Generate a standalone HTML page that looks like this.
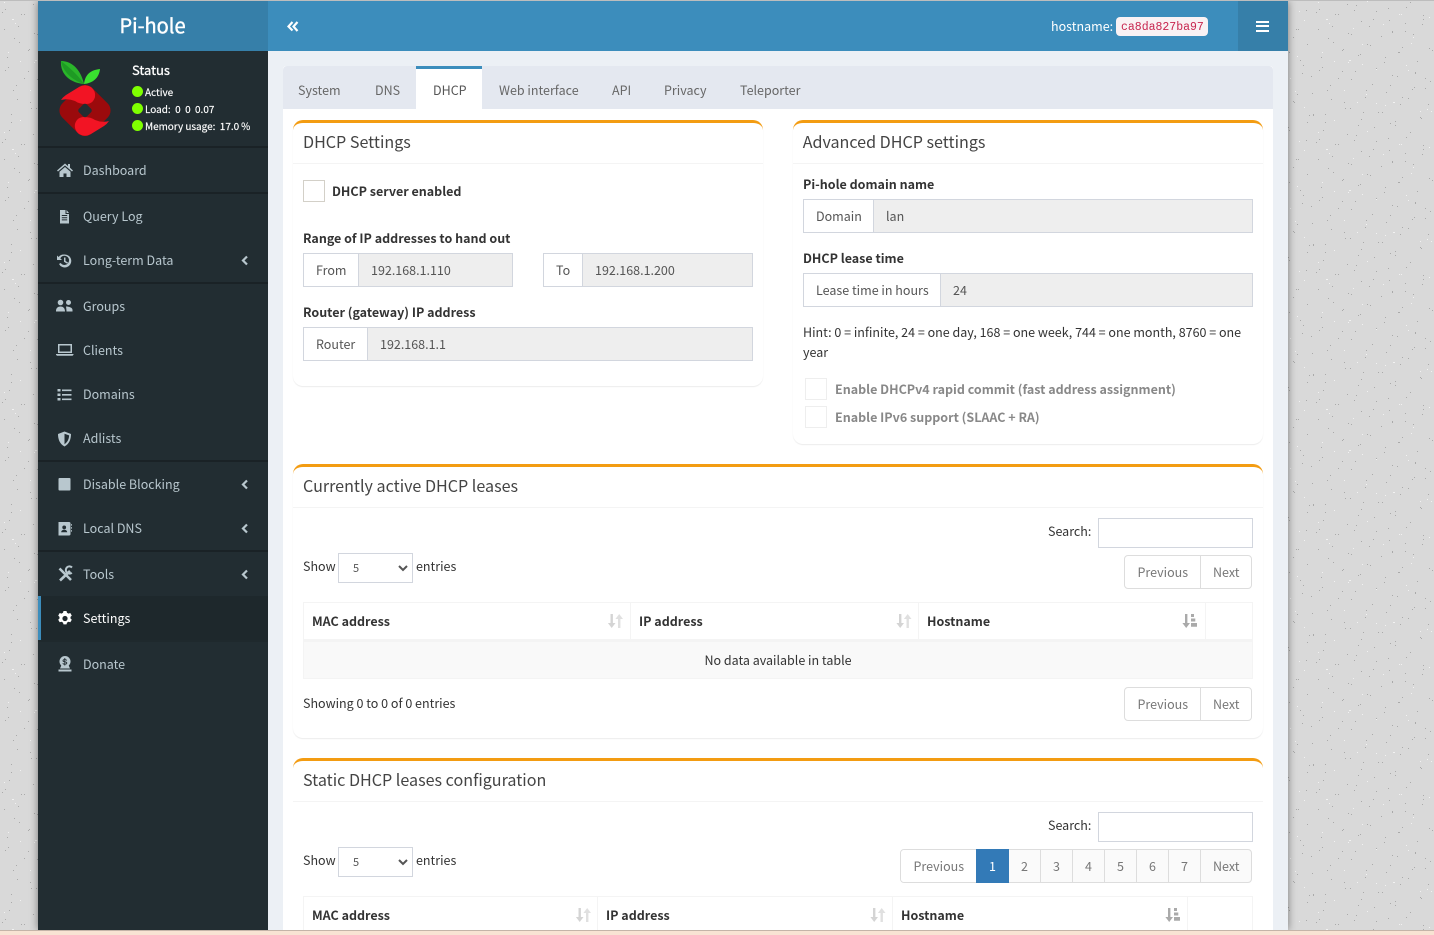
<!DOCTYPE html>
<html><head><meta charset="utf-8"><title>Pi-hole</title>
<style>
html,body{margin:0;padding:0;width:1434px;height:935px;overflow:hidden;background:#d9d9d9}
body{position:relative;font-family:"Noto Sans CJK JP","Liberation Sans",sans-serif;font-size:12.5px;color:#333}
div,span.t,svg.a{position:absolute;box-sizing:border-box}
.t{position:absolute;white-space:nowrap;line-height:20px}
.b{font-weight:700}
.s{color:#b8c7ce}
.box{background:#fff;border-top:3px solid #f39c12;border-radius:10px;box-shadow:0 1px 1px rgba(0,0,0,.08)}
.hr{background:#f4f4f4;height:1px}
.tt{font-size:16.1px;color:#444}
.add{background:#fff;border:1px solid #d2d6de;color:#555}
.inp{background:#eee;border:1px solid #d2d6de;border-left:0;color:#555}
.cb{background:#fff;border:1px solid #d3d0c8;width:22px;height:22px}
.cbd{border-color:#eee}
.sep{background:#1a2226;height:2px;left:38px;width:230px}
.ic{fill:#b8c7ce}
.st{font-size:9.95px;color:#fff}
</style></head><body>
<svg class="a" style="left:0;top:0" width="1434" height="935"><defs><pattern id="sp" width="146" height="130" patternUnits="userSpaceOnUse"><g fill="#aaa"><rect x="5" y="9" width="1" height="1"/><rect x="21" y="14" width="1" height="1"/><rect x="33" y="4" width="1" height="1"/><rect x="47" y="21" width="1" height="1"/><rect x="62" y="11" width="1" height="1"/><rect x="78" y="31" width="1" height="2"/><rect x="92" y="7" width="1" height="1"/><rect x="109" y="19" width="1" height="1"/><rect x="128" y="29" width="1" height="1"/><rect x="14" y="38" width="1" height="1"/><rect x="29" y="49" width="1" height="1"/><rect x="53" y="44" width="1" height="1"/><rect x="71" y="57" width="1" height="1"/><rect x="88" y="47" width="1" height="1"/><rect x="103" y="61" width="1" height="1"/><rect x="121" y="52" width="1" height="1"/><rect x="139" y="44" width="1" height="1"/><rect x="8" y="67" width="1" height="1"/><rect x="24" y="78" width="1" height="1"/><rect x="41" y="71" width="1" height="1"/><rect x="58" y="84" width="1" height="1"/><rect x="83" y="76" width="1" height="1"/><rect x="98" y="89" width="1" height="1"/><rect x="116" y="81" width="1" height="1"/><rect x="134" y="73" width="1" height="1"/><rect x="17" y="99" width="1" height="1"/><rect x="36" y="108" width="1" height="1"/><rect x="51" y="97" width="1" height="1"/><rect x="68" y="112" width="1" height="1"/><rect x="86" y="104" width="1" height="1"/><rect x="107" y="118" width="1" height="1"/><rect x="125" y="101" width="1" height="1"/><rect x="141" y="115" width="1" height="1"/><rect x="11" y="122" width="1" height="1"/><rect x="44" y="125" width="1" height="1"/><rect x="76" y="123" width="1" height="1"/></g><g fill="#f2f2f2"><rect x="12" y="19" width="2" height="1"/><rect x="39" y="28" width="1" height="1"/><rect x="69" y="24" width="1" height="1"/><rect x="99" y="37" width="1" height="1"/><rect x="131" y="11" width="1" height="1"/><rect x="20" y="61" width="1" height="1"/><rect x="48" y="64" width="1" height="1"/><rect x="94" y="70" width="1" height="1"/><rect x="127" y="91" width="1" height="1"/><rect x="30" y="90" width="1" height="1"/><rect x="62" y="103" width="1" height="1"/><rect x="113" y="109" width="1" height="1"/></g></pattern><pattern id="sp2" href="#sp" patternTransform="translate(23 41)"/><pattern id="sp3" href="#sp" patternTransform="translate(67 83)"/></defs><rect width="1434" height="935" fill="#d9d9d9"/><rect width="1434" height="935" fill="url(#sp)"/><rect width="1434" height="935" fill="url(#sp2)"/><rect width="1434" height="935" fill="url(#sp3)"/></svg>

<!-- page -->
<div style="left:38px;top:1px;width:1250px;height:929px;background:#ecf0f5;box-shadow:0 0 8px rgba(0,0,0,.45)"></div>
<div style="left:0;top:0;width:1434px;height:1px;background:#bdbdbd"></div>
<div style="left:0;top:930px;width:1434px;height:5px;background:#f8e3d3;border-top:1px solid #c4b4a8"></div>

<!-- navbar -->
<div style="left:38px;top:1px;width:1250px;height:50px;background:#3c8dbc"></div>
<div style="left:38px;top:1px;width:230px;height:50px;background:#367fa9"></div>
<span class="t" style="left:37.500px;width:230px;text-align:center;top:13px;line-height:24px;font-size:20px;color:#fff;-webkit-text-stroke:.4px #fff">Pi-hole</span>
<svg class="a" style="left:287px;top:20.500px" width="12" height="11" viewBox="0 0 12 11"><path d="M5.500 1 1.500 5.500l4 4M10.500 1l-4 4.500 4 4.500" fill="none" stroke="#fff" stroke-width="2.200"/></svg>
<span class="t" style="left:1051px;top:16px;color:#fff">hostname:</span>
<div style="left:1116px;top:17px;width:92px;height:19px;background:#f9f2f4;border-radius:4px"></div>
<span class="t" style="left:1121px;top:18px;line-height:19px;font-family:'Liberation Mono',monospace;font-size:11.5px;color:#c7254e">ca8da827ba97</span>
<div style="left:1238px;top:1px;width:50px;height:50px;background:#367fa9"></div>
<div style="left:1256px;top:21px;width:13px;height:2px;background:#fff"></div>
<div style="left:1256px;top:25px;width:13px;height:2px;background:#fff"></div>
<div style="left:1256px;top:30px;width:13px;height:2px;background:#fff"></div>

<!-- sidebar -->
<div style="left:38px;top:51px;width:230px;height:879px;background:#222d32"></div>
<svg class="a" style="left:55px;top:55px" width="60" height="85" viewBox="55 55 60 85">
<path d="M61 61C73 61 81 71 84 84 71 83 60 75 61 61Z" fill="#2ab52a"/><path d="M61 61C70 68 78 75 84 84 72 80 63 72 61 61Z" fill="#1e9a24"/>
<path d="M100 69C99 78 93 83 84 84 85 75 90 70 100 69Z" fill="#39e02f"/>
<rect x="64" y="89.500" width="42" height="42" rx="10" transform="rotate(45 85 110.500)" fill="#9b0a0c"/>
<path d="M79 87Q85 83.500 91 87 96 91 95 97 93 104 86 104 79 104 75 101 68 98 61 100 63 97 66 95Z" fill="#f21424"/>
<path d="M91 134Q85 137.500 79 134 74 130 75 124 77 117 84 117 91 117 95 120 102 123 109 121 107 124 104 126Z" fill="#f21424"/>
<rect x="79.500" y="105" width="11" height="11" rx="2.500" transform="rotate(45 85 110.500)" fill="#222d32"/>
</svg>
<span class="t" style="left:132px;top:60px;font-size:13px;color:#fff;-webkit-text-stroke:.3px #fff">Status</span>
<div style="left:132px;top:86px;width:11px;height:11px;border-radius:50%;background:#7fff00"></div>
<div style="left:132px;top:103px;width:11px;height:11px;border-radius:50%;background:#7fff00"></div>
<div style="left:132px;top:120px;width:11px;height:11px;border-radius:50%;background:#7fff00"></div>
<span class="t st" style="left:145px;top:82px;-webkit-text-stroke:.15px #fff">Active</span>
<span class="t st" style="left:145px;top:99px;-webkit-text-stroke:.15px #fff">Load:&nbsp; 0&nbsp; 0&nbsp; 0.07</span>
<span class="t st" style="left:145px;top:116px;-webkit-text-stroke:.15px #fff">Memory usage:&nbsp; 17.0&thinsp;%</span>

<div class="sep" style="top:146px"></div><div class="sep" style="top:192px"></div><div class="sep" style="top:282px"></div><div class="sep" style="top:460px"></div><div class="sep" style="top:550px"></div>
<div style="left:38px;top:596px;width:230px;height:44px;background:#1e282c"></div>
<div style="left:38px;top:596px;width:3px;height:44px;background:#3c8dbc"></div>
<div class="sep" style="top:640px;background:#1f292d"></div>

<span class="t s" style="left:83px;top:160px">Dashboard</span>
<span class="t s" style="left:83px;top:206px">Query Log</span>
<span class="t s" style="left:83px;top:250px">Long-term Data</span>
<span class="t s" style="left:83px;top:296px">Groups</span>
<span class="t s" style="left:83px;top:340px">Clients</span>
<span class="t s" style="left:83px;top:384px">Domains</span>
<span class="t s" style="left:83px;top:428px">Adlists</span>
<span class="t s" style="left:83px;top:474px">Disable Blocking</span>
<span class="t s" style="left:83px;top:518px">Local DNS</span>
<span class="t s" style="left:83px;top:564px">Tools</span>
<span class="t" style="left:83px;top:608px;color:#fff">Settings</span>
<span class="t s" style="left:83px;top:654px">Donate</span>

<!-- sidebar icons -->
<svg class="a" style="left:0;top:0" width="268" height="700">
<g class="ic">
<path d="M65 163.500 57 170.500l1 1 7-6 7 6 1-1-3-2.700V164h-2v2.100zM65 167l-5.500 4.700V177h4v-3.500h3V177h4v-5.300z"/>
<path d="M64.500 254.500a6.500 6.500 0 1 1-5.500 9.500l1.700-1a4.600 4.600 0 1 0-.4-4.600l1.700 1.600H57v-4.500l1.600 1.500a6.500 6.500 0 0 1 5.900-2.500zM64 257.500h1.500v3.500l2.500 1.500-.8 1.200-3.200-2z"/>
<circle cx="60.500" cy="302.500" r="2.800"/><circle cx="68.500" cy="302.500" r="2.500"/><path d="M56 311c0-3 2-4.500 4.500-4.500S65 308 65 311.500H56zM66 306.500c3 0 6.500 1 6.500 3.500v1.500H66.500c0-2-.3-3.500-.5-5z"/>
<path d="M58 344h14v9H58zm1.500 1.500v6h11v-6zM56 354h17.500v.8l-1 1H57l-1-1z" fill-rule="evenodd"/>
<path d="M57.500 389h3v2.500h-3zM57.500 393.500h3v2.500h-3zM57.500 398h3v2.500h-3zM62 389.500h9.500v1.600H62zM62 394h9.500v1.600H62zM62 398.500h9.500v1.600H62z"/>
<path d="M64.500 431.500l6.500 2.500c0 5-1.500 9.700-6.500 12.500-5-2.800-6.500-7.500-6.500-12.500zm0 2.200v10.500c3-2 4.500-5 4.600-8.800z" fill-rule="evenodd"/>
<rect x="58.500" y="478" width="12" height="12.500" rx="1"/>
<path d="M58.500 522h10.500c1 0 1.500.6 1.500 1.500V534c0 1-.5 1.500-1.500 1.500H58.500zm5.700 3.500a1.900 1.900 0 1 0 0 3.800 1.900 1.900 0 0 0 0-3.800zm-3 6.700h6c0-1.500-1.300-2.500-3-2.500s-3 1-3 2.500z" fill-rule="evenodd"/>
<path d="M71 524h.8v1.800H71zM71 527h.8v1.800H71zM71 530h.8v1.800H71z"/>
<path d="M63.500 611l3 0 .5 1.800 1.500.8 1.800-.6 1.500 2.600-1.300 1.300v1.600l1.300 1.200-1.500 2.600-1.800-.6-1.500.9-.5 1.800h-3l-.5-1.800-1.500-.9-1.800.6-1.500-2.600 1.300-1.200v-1.600l-1.300-1.300 1.500-2.600 1.800.6 1.500-.8zM65 615.900a2.600 2.600 0 1 0 0 5.200 2.600 2.600 0 0 0 0-5.200z" fill-rule="evenodd" style="fill:#fff"/>
<circle cx="65" cy="661.500" r="5.500"/><path d="M61.500 665h7l1.500 3.500h-10zM58.500 669.500h13v2h-13z"/>
<path d="M60 210h5.500v4H69v9.500h-9z"/><path d="M66.500 210l2.500 3h-2.500z"/>
</g>
<path d="M62.800 663.300c.3.700 1 .9 2 .9 1.300 0 2-.5 2-1.200 0-1.700-3.800-.6-3.800-2.300 0-.7.700-1.100 1.800-1.100 1 0 1.600.3 1.900.9M64.800 658v7.500" stroke="#222d32" fill="none" stroke-width=".9"/>
<path d="M61.800 215.500h5.400M61.800 217.700h5.400M61.800 219.900h5.400" stroke="#222d32" stroke-width="1"/>
<g stroke="#b8c7ce" fill="none">
<path d="M59.500 568.500 71 580" stroke-width="2.600"/>
<path d="M70 571 60 580.500" stroke-width="2.600"/>
<path d="M72 567.500a3.600 3.600 0 1 0-.2 5.200" stroke-width="2"/>
</g>
<g fill="none" stroke="#b8c7ce" stroke-width="2.200"><path d="M247 256.500l-4 4 4 4M247 480.500l-4 4 4 4M247 524.500l-4 4 4 4M247 570.500l-4 4 4 4"/></g>
</svg>

<!-- tabs -->
<div style="left:283px;top:66px;width:990px;height:864px;background:#fff;border-radius:3px 3px 0 0"></div>
<div style="left:283px;top:66px;width:990px;height:43px;background:#e4e8f0;border-radius:4px 4px 0 0"></div>
<div style="left:416px;top:66px;width:66px;height:44px;background:#fff;border-top:3px solid #3c8dbc"></div>
<span class="t" style="left:298px;top:80px;color:#666">System</span>
<span class="t" style="left:375px;top:80px;color:#666">DNS</span>
<span class="t" style="left:433px;top:80px;color:#555">DHCP</span>
<span class="t" style="left:499px;top:80px;color:#666">Web interface</span>
<span class="t" style="left:612px;top:80px;color:#666">API</span>
<span class="t" style="left:664px;top:80px;color:#666">Privacy</span>
<span class="t" style="left:740px;top:80px;color:#666">Teleporter</span>

<!-- DHCP Settings -->
<div class="box" style="left:293px;top:120px;width:470px;height:266px"></div>
<div class="hr" style="left:293px;top:163px;width:470px"></div>
<span class="t tt" style="left:303px;top:131px">DHCP Settings</span>
<div class="cb" style="left:303px;top:180px"></div>
<span class="t b" style="left:332px;top:181px">DHCP server enabled</span>
<span class="t b" style="left:303px;top:228px">Range of IP addresses to hand out</span>
<div class="add" style="left:303px;top:253px;width:56px;height:34px"></div><div class="inp" style="left:359px;top:253px;width:154px;height:34px"></div>
<span class="t" style="left:316px;top:260px;color:#555">From</span><span class="t" style="left:371px;top:260px;color:#555">192.168.1.110</span>
<div class="add" style="left:543px;top:253px;width:40px;height:34px"></div><div class="inp" style="left:583px;top:253px;width:170px;height:34px"></div>
<span class="t" style="left:556px;top:260px;color:#555">To</span><span class="t" style="left:595px;top:260px;color:#555">192.168.1.200</span>
<span class="t b" style="left:303px;top:302px">Router (gateway) IP address</span>
<div class="add" style="left:303px;top:327px;width:65px;height:34px"></div><div class="inp" style="left:368px;top:327px;width:385px;height:34px"></div>
<span class="t" style="left:316px;top:334px;color:#555">Router</span><span class="t" style="left:380px;top:334px;color:#555">192.168.1.1</span>

<!-- Advanced -->
<div class="box" style="left:793px;top:120px;width:470px;height:324px"></div>
<div class="hr" style="left:793px;top:163px;width:470px"></div>
<span class="t tt" style="left:802.700px;top:131px">Advanced DHCP settings</span>
<span class="t b" style="left:803px;top:174px">Pi-hole domain name</span>
<div class="add" style="left:803px;top:199px;width:71px;height:34px"></div><div class="inp" style="left:874px;top:199px;width:379px;height:34px"></div>
<span class="t" style="left:816px;top:206px;color:#555">Domain</span><span class="t" style="left:886px;top:206px;color:#555">lan</span>
<span class="t b" style="left:803px;top:248px">DHCP lease time</span>
<div class="add" style="left:803px;top:273px;width:138px;height:34px"></div><div class="inp" style="left:941px;top:273px;width:312px;height:34px"></div>
<span class="t" style="left:816px;top:280px;color:#555">Lease time in hours</span><span class="t" style="left:953px;top:280px;color:#555">24</span>
<span class="t" style="left:803px;top:322px">Hint: 0 = infinite, 24 = one day, 168 = one week, 744 = one month, 8760 = one</span>
<span class="t" style="left:803px;top:342px">year</span>
<div class="cb cbd" style="left:805px;top:378px"></div>
<div class="cb cbd" style="left:805px;top:406px"></div>
<span class="t b" style="left:835px;top:379px;color:#888">Enable DHCPv4 rapid commit (fast address assignment)</span>
<span class="t b" style="left:835px;top:407px;color:#888">Enable IPv6 support (SLAAC + RA)</span>

<!-- Active leases -->
<div class="box" style="left:293px;top:464px;width:970px;height:274px"></div>
<div class="hr" style="left:293px;top:507px;width:970px"></div>
<span class="t tt" style="left:303px;top:475px">Currently active DHCP leases</span>
<span class="t" style="left:1048px;top:521px">Search:</span>
<div style="left:1098px;top:518px;width:155px;height:30px;border:1px solid #d2d6de;background:#fff"></div>
<span class="t" style="left:303px;top:556px">Show</span>
<div style="left:338px;top:553px;width:75px;height:30px;border:1px solid #d2d6de;background:#fff"></div>
<span class="t" style="left:353px;top:558px;font-size:11px;color:#555">5</span>
<svg class="a" style="left:398px;top:565px" width="10" height="7"><path d="M1 1l4 4 4-4" fill="none" stroke="#555" stroke-width="2"/></svg>
<span class="t" style="left:416px;top:556px">entries</span>
<div style="left:1124px;top:555px;width:128px;height:34px;border:1px solid #ddd;border-radius:4px"></div>
<div style="left:1200px;top:555px;width:1px;height:34px;background:#ddd"></div>
<span class="t" style="left:1137.500px;top:562px;color:#777">Previous</span>
<span class="t" style="left:1213px;top:562px;color:#777">Next</span>
<!-- table -->
<div style="left:303px;top:602px;width:950px;height:77px;border:1px solid #f4f4f4"></div>
<div style="left:303px;top:639px;width:950px;height:3px;background:#f4f4f4"></div>
<div style="left:304px;top:642px;width:948px;height:36px;background:#f9f9f9"></div>
<div style="left:630px;top:602px;width:1px;height:38px;background:#f4f4f4"></div>
<div style="left:918px;top:602px;width:1px;height:38px;background:#f4f4f4"></div>
<div style="left:1205px;top:602px;width:1px;height:38px;background:#f4f4f4"></div>
<span class="t b" style="left:312px;top:611px">MAC address</span>
<span class="t b" style="left:639px;top:611px">IP address</span>
<span class="t b" style="left:927px;top:611px">Hostname</span>
<span class="t" style="left:304px;width:948px;text-align:center;top:650px">No data available in table</span>
<span class="t" style="left:303px;top:693px">Showing 0 to 0 of 0 entries</span>
<div style="left:1124px;top:687px;width:128px;height:34px;border:1px solid #ddd;border-radius:4px"></div>
<div style="left:1200px;top:687px;width:1px;height:34px;background:#ddd"></div>
<span class="t" style="left:1137.500px;top:694px;color:#777">Previous</span>
<span class="t" style="left:1213px;top:694px;color:#777">Next</span>

<!-- Static -->
<div class="box" style="left:293px;top:758px;width:970px;height:172px;border-radius:10px 10px 0 0;box-shadow:none"></div>
<div class="hr" style="left:293px;top:801px;width:970px"></div>
<span class="t tt" style="left:303px;top:769px">Static DHCP leases configuration</span>
<span class="t" style="left:1048px;top:815px">Search:</span>
<div style="left:1098px;top:812px;width:155px;height:30px;border:1px solid #d2d6de;background:#fff"></div>
<span class="t" style="left:303px;top:850px">Show</span>
<div style="left:338px;top:847px;width:75px;height:30px;border:1px solid #d2d6de;background:#fff"></div>
<span class="t" style="left:353px;top:852px;font-size:11px;color:#555">5</span>
<svg class="a" style="left:398px;top:859px" width="10" height="7"><path d="M1 1l4 4 4-4" fill="none" stroke="#555" stroke-width="2"/></svg>
<span class="t" style="left:416px;top:850px">entries</span>
<div style="left:900px;top:849px;width:352px;height:34px;border:1px solid #ddd;border-radius:4px;background:#fafafa"></div>
<div style="left:901px;top:850px;width:76px;height:32px;background:#fff;border-radius:3px 0 0 3px"></div>
<div style="left:976px;top:849px;width:33px;height:34px;background:#337ab7"></div>
<div style="left:1040px;top:849px;width:1px;height:34px;background:#ddd"></div>
<div style="left:1072px;top:849px;width:1px;height:34px;background:#ddd"></div>
<div style="left:1104px;top:849px;width:1px;height:34px;background:#ddd"></div>
<div style="left:1136px;top:849px;width:1px;height:34px;background:#ddd"></div>
<div style="left:1168px;top:849px;width:1px;height:34px;background:#ddd"></div>
<div style="left:1200px;top:849px;width:1px;height:34px;background:#ddd"></div>
<span class="t" style="left:913.500px;top:856px;color:#777">Previous</span>
<span class="t" style="left:989px;top:856px;color:#fff">1</span>
<span class="t" style="left:1021px;top:856px;color:#777">2</span>
<span class="t" style="left:1053px;top:856px;color:#777">3</span>
<span class="t" style="left:1085px;top:856px;color:#777">4</span>
<span class="t" style="left:1117px;top:856px;color:#777">5</span>
<span class="t" style="left:1149px;top:856px;color:#777">6</span>
<span class="t" style="left:1181px;top:856px;color:#777">7</span>
<span class="t" style="left:1213px;top:856px;color:#777">Next</span>
<div style="left:303px;top:896px;width:950px;height:34px;border:1px solid #f4f4f4;border-bottom:0"></div>
<div style="left:597px;top:896px;width:1px;height:34px;background:#f4f4f4"></div>
<div style="left:892px;top:896px;width:1px;height:34px;background:#f4f4f4"></div>
<div style="left:1187px;top:896px;width:1px;height:34px;background:#f4f4f4"></div>
<span class="t b" style="left:312px;top:905px">MAC address</span>
<span class="t b" style="left:606px;top:905px">IP address</span>
<span class="t b" style="left:901px;top:905px">Hostname</span>
<svg class="a" style="left:0;top:0;pointer-events:none" width="1434" height="930">
<defs>
<g id="so"><path d="M3 0h2.400v9H8L4.200 14 .4 9H3z" fill="#d4d4d4"/><path d="M10.500 14h2.400V5h2.600L11.700 0 7.900 5h2.600z" fill="#e0e0e0"/></g>
<g id="sa"><path d="M3 0h2.400v9H8L4.200 14 .4 9H3z" fill="#aaa"/><path d="M9 0h3v3H9zM9 4.500h4.300v3H9zM9 9h6v3.800H9z" fill="#aaa"/></g>
</defs>
<use href="#so" x="607.500" y="614"/><use href="#so" x="896" y="614"/><use href="#sa" x="1182" y="614"/>
<use href="#so" x="575.500" y="908"/><use href="#so" x="870" y="908"/><use href="#sa" x="1165" y="908"/>
</svg>
</body></html>
